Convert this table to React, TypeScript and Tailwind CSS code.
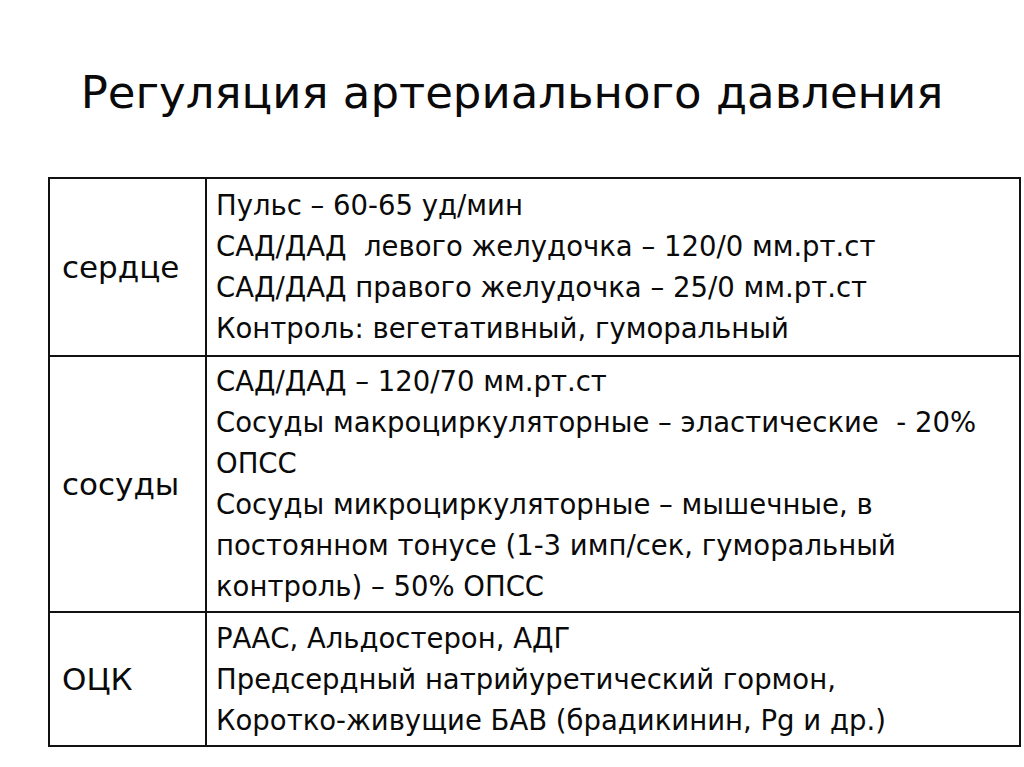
const rows = [
  {
    label: "сердце",
    lines: [
      "Пульс – 60-65 уд/мин",
      "САД/ДАД  левого желудочка – 120/0 мм.рт.ст",
      "САД/ДАД правого желудочка – 25/0 мм.рт.ст",
      "Контроль: вегетативный, гуморальный",
    ],
    h: "h-[176px]",
  },
  {
    label: "сосуды",
    lines: [
      "САД/ДАД – 120/70 мм.рт.ст",
      "Сосуды макроциркуляторные – эластические  - 20%",
      "ОПСС",
      "Сосуды микроциркуляторные – мышечные, в",
      "постоянном тонусе (1-3 имп/сек, гуморальный",
      "контроль) – 50% ОПСС",
    ],
    h: "h-[256px]",
  },
  {
    label: "ОЦК",
    lines: [
      "РААС, Альдостерон, АДГ",
      "Предсердный натрийуретический гормон,",
      "Коротко-живущие БАВ (брадикинин, Pg и др.)",
    ],
    h: "h-[134px]",
  },
];

export default function App() {
  return (
    <div
      className="w-[1024px] h-[767px] bg-white text-[#0a0a0a] overflow-hidden"
      style={{ fontFamily: "'DejaVu Sans', 'Open Sans', sans-serif" }}
    >
      <div className="h-[177px] flex items-center justify-center pt-[7px]">
        <h1 className="text-[45px] leading-none font-normal">Регуляция артериального давления</h1>
      </div>

      {/* table */}
      <div className="ml-[48px] w-[973px] border-2 border-[#111]">
        {rows.map((r, i) => (
          <div
            key={r.label}
            className={`flex ${r.h} ${i > 0 ? "border-t-2 border-[#111]" : ""}`}
          >
            <div className="w-[157px] shrink-0 border-r-2 border-[#111] flex items-center pl-[12px] text-[31px]">
              {r.label}
            </div>
            <div className="flex-1 flex flex-col justify-center pl-[9px] text-[27.5px] leading-[41px]">
              {r.lines.map((l, j) => (
                <div key={j} className="whitespace-pre">
                  {l}
                </div>
              ))}
            </div>
          </div>
        ))}
      </div>
    </div>
  );
}
